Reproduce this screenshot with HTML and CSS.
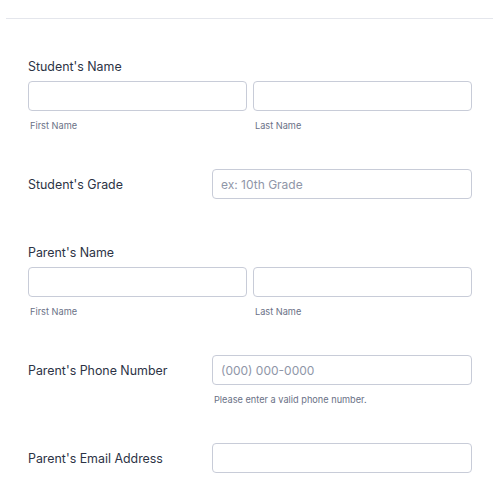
FILE: index.html
```html
<!DOCTYPE html>
<html lang="en">
<head>
<meta charset="utf-8">
<title>Student Form</title>
<link rel="stylesheet" href="styles.css">
</head>
<body>
<div class="divider"></div>
<form class="form">
  <div class="field stacked first">
    <label class="label">Student's Name</label>
    <div class="pair">
      <div class="sub">
        <input class="input" type="text">
        <span class="sublabel">First Name</span>
      </div>
      <div class="sub">
        <input class="input" type="text">
        <span class="sublabel">Last Name</span>
      </div>
    </div>
  </div>

  <div class="field side">
    <label class="label">Student's Grade</label>
    <div class="control">
      <input class="input" type="text" placeholder="ex: 10th Grade">
    </div>
  </div>

  <div class="field stacked">
    <label class="label">Parent's Name</label>
    <div class="pair">
      <div class="sub">
        <input class="input" type="text">
        <span class="sublabel">First Name</span>
      </div>
      <div class="sub">
        <input class="input" type="text">
        <span class="sublabel">Last Name</span>
      </div>
    </div>
  </div>

  <div class="field side">
    <label class="label">Parent's Phone Number</label>
    <div class="control">
      <input class="input" type="text" placeholder="(000) 000-0000">
      <span class="helper">Please enter a valid phone number.</span>
    </div>
  </div>

  <div class="field side">
    <label class="label">Parent's Email Address</label>
    <div class="control">
      <input class="input" type="text">
    </div>
  </div>
</form>
</body>
</html>
```

FILE: styles.css
```css
* { box-sizing: border-box; }

html, body {
  margin: 0;
  padding: 0;
  background: #ffffff;
}

body {
  font-family: Inter, "Noto Sans", sans-serif;
  color: #2c3345;
}

.divider {
  margin: 18px 7px 0 6px;
  height: 1px;
  background: #e4e6ec;
}

.form {
  margin: 0;
  padding: 0 28px;
}

.field {
  padding-top: 35px;
}

.field.stacked {
  padding-top: 43px;
  display: flex;
  flex-direction: column;
}

.field.stacked.first {
  padding-top: 37px;
}

.label {
  padding-top: 1px;
  font-size: 12.4px;
  line-height: 20px;
  font-weight: 400;
  color: #2c3345;
}

.field.stacked .label {
  margin-bottom: 4px;
}

.pair {
  display: grid;
  grid-template-columns: 1fr 1fr;
  column-gap: 6px;
}

.sub {
  display: flex;
  flex-direction: column;
}

.input {
  display: block;
  width: 100%;
  height: 30px;
  margin: 0;
  padding: 0 8px;
  border: 1px solid #c8ccd8;
  border-radius: 4px;
  background: #ffffff;
  font-family: Inter, "Noto Sans", sans-serif;
  font-size: 12px;
  color: #2c3345;
  outline: none;
}

.input::placeholder {
  color: #8f96a8;
}

.sublabel,
.helper {
  display: block;
  margin-top: 7px;
  padding-left: 2px;
  font-size: 9.2px;
  line-height: 16px;
  color: #6a7186;
}

.field.side {
  display: flex;
  align-items: flex-start;
}

.field.side .label {
  width: 184px;
  flex: none;
  padding-top: 2px;
  line-height: 28px;
}

.control {
  flex: 1;
  display: flex;
  flex-direction: column;
}
```
